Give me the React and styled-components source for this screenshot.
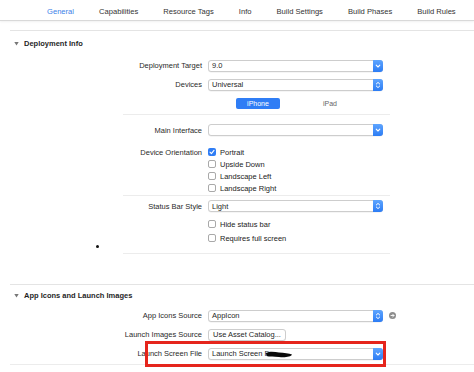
import React from 'react';
import styled, { createGlobalStyle } from 'styled-components';

const GlobalStyle = createGlobalStyle`
  html, body {
    margin: 0;
    padding: 0;
    background: #ffffff;
  }
  body {
    font-family: "Liberation Sans", Arial, sans-serif;
    font-size: 7.5px;
    color: #222;
  }
`;

const Page = styled.div`
  position: relative;
  width: 474px;
  height: 372px;
  overflow: hidden;
  background: #fff;
`;

const TabBar = styled.div`
  height: 20px;
  display: flex;
  align-items: center;
  gap: 25px;
  padding-left: 47px;
  border-bottom: 1px solid #d9d9d9;
  box-shadow: 0 1px 2px rgba(0, 0, 0, 0.06);
`;

const Tab = styled.div`
  font-size: 7.6px;
  color: ${p => (p.active ? '#3a7ee8' : '#333')};
  padding-top: 2px;
`;

const Section = styled.div`
  margin-left: 10px;
  border-top: 1px solid #e4e4e4;
  margin-top: ${p => p.top}px;
`;

const SectionHeader = styled.div`
  height: ${p => p.h}px;
  display: flex;
  align-items: center;
  padding-left: 4px;
  gap: 5px;
  font-weight: bold;
  color: #1f1f1f;
`;

const Row = styled.div`
  display: grid;
  grid-template-columns: 192px 175px auto;
  column-gap: 6px;
  align-items: center;
  height: ${p => p.h || 19}px;
  margin-top: ${p => p.mt || 0}px;
`;

const Label = styled.div`
  text-align: right;
  color: #2a2a2a;
  white-space: nowrap;
`;

const Popup = styled.div`
  position: relative;
  height: 12px;
  box-sizing: border-box;
  display: flex;
  align-items: center;
  border: 1px solid #cdcdcd;
  border-radius: 3px;
  padding-left: 3px;
  background: #fff;
  color: #1f1f1f;
  box-shadow: 0 0.5px 0.5px rgba(0, 0, 0, 0.08);
`;

const PopupText = styled.span`
  flex: 1;
  white-space: nowrap;
`;

const Stepper = styled.div`
  width: 10px;
  align-self: stretch;
  margin: -1px -1px -1px 0;
  border-radius: 0 3px 3px 0;
  background: linear-gradient(#5ea5ff, #2c7cf4);
  display: flex;
  align-items: center;
  justify-content: center;
`;

const Button = styled.div`
  justify-self: start;
  height: 12px;
  box-sizing: border-box;
  padding: 0 4px;
  display: flex;
  align-items: center;
  border: 1px solid #cdcdcd;
  border-radius: 3px;
  background: #fff;
  color: #1f1f1f;
  box-shadow: 0 0.5px 0.5px rgba(0, 0, 0, 0.08);
`;

const Segments = styled.div`
  grid-column: 2;
  display: flex;
  align-items: center;
  padding-left: 28px;
  gap: 43px;
`;

const Segment = styled.div`
  width: ${p => (p.active ? '44px' : 'auto')};
  height: 11px;
  border-radius: 2px;
  display: flex;
  align-items: center;
  justify-content: center;
  background: ${p => (p.active ? '#2f7df5' : 'transparent')};
  color: ${p => (p.active ? '#fff' : '#666')};
  font-size: 7px;
`;

const Divider = styled.div`
  height: 1px;
  background: #ececec;
  margin-top: ${p => p.mt || 0}px;
  margin-left: ${p => (p.full ? 0 : 113)}px;
  width: ${p => (p.full ? 'auto' : '267px')};
`;

const CheckList = styled.div`
  display: flex;
  flex-direction: column;
  margin-top: ${p => p.mt || 0}px;
`;

const CheckRow = styled.div`
  display: grid;
  grid-template-columns: 192px auto;
  column-gap: 6px;
  align-items: center;
  height: ${p => p.h}px;
`;

const CheckItem = styled.div`
  display: flex;
  align-items: center;
  gap: 4px;
  color: #222;
`;

const Box = styled.div`
  width: 8px;
  height: 8px;
  box-sizing: border-box;
  border-radius: 2px;
  border: ${p => (p.checked ? 'none' : '1px solid #a9a9a9')};
  background: ${p => (p.checked ? '#2f7df5' : '#fff')};
  display: flex;
  align-items: center;
  justify-content: center;
`;

const GoIcon = styled.div`
  width: 7px;
  height: 7px;
  border-radius: 50%;
  background: #8d8d8d;
  display: flex;
  align-items: center;
  justify-content: center;
`;

const Scribble = styled.svg`
  position: absolute;
  left: 56px;
  top: 1px;
`;

const RedMark = styled.div`
  position: absolute;
  left: 145px;
  top: 341px;
  width: 241px;
  height: 26px;
  box-sizing: border-box;
  border: 3px solid #e5251c;
`;

const Dot = styled.div`
  position: absolute;
  left: 96px;
  top: 245px;
  width: 3px;
  height: 3px;
  border-radius: 50%;
  background: #111;
`;

const Triangle = () => (
  <svg width="5" height="5" viewBox="0 0 5 5">
    <path d="M0.3 1 H4.7 L2.5 4.4 Z" fill="#777" />
  </svg>
);

const Chevron = ({ double }) => (
  <svg width="8" height="10" viewBox="0 0 8 10">
    {double ? (
      <path d="M2.3 4 L4 2.4 L5.7 4 M2.3 6 L4 7.6 L5.7 6" stroke="#fff" strokeWidth="1" fill="none" strokeLinecap="round" strokeLinejoin="round" />
    ) : (
      <path d="M2.2 4.2 L4 6 L5.8 4.2" stroke="#fff" strokeWidth="1.1" fill="none" strokeLinecap="round" strokeLinejoin="round" />
    )}
  </svg>
);

const Select = ({ value, double, children }) => (
  <Popup>
    <PopupText>{value}</PopupText>
    {children}
    <Stepper>
      <Chevron double={double} />
    </Stepper>
  </Popup>
);

const Check = ({ checked, label }) => (
  <CheckItem>
    <Box checked={checked}>
      {checked && (
        <svg width="6" height="6" viewBox="0 0 6 6">
          <path d="M1 3.2 L2.4 4.6 L5 1.4" stroke="#fff" strokeWidth="1.1" fill="none" strokeLinecap="round" strokeLinejoin="round" />
        </svg>
      )}
    </Box>
    {label}
  </CheckItem>
);

const tabs = ['General', 'Capabilities', 'Resource Tags', 'Info', 'Build Settings', 'Build Phases', 'Build Rules'];

export default function App() {
  return (
    <Page>
      <GlobalStyle />
      <TabBar>
        {tabs.map(t => (
          <Tab key={t} active={t === 'General'}>{t}</Tab>
        ))}
      </TabBar>

      <Section top={9}>
        <SectionHeader h={25}>
          <Triangle />
          Deployment Info
        </SectionHeader>
        <Row>
          <Label>Deployment Target</Label>
          <Select value="9.0" />
        </Row>
        <Row>
          <Label>Devices</Label>
          <Select value="Universal" double />
        </Row>
        <Row h={18}>
          <Segments>
            <Segment active>iPhone</Segment>
            <Segment>iPad</Segment>
          </Segments>
        </Row>
        <Divider mt={2} />

        <Row h={18} mt={6}>
          <Label>Main Interface</Label>
          <Select value="" />
        </Row>
        <CheckList mt={7}>
          <CheckRow h={12}>
            <Label>Device Orientation</Label>
            <Check checked label="Portrait" />
          </CheckRow>
          <CheckRow h={12}>
            <span />
            <Check label="Upside Down" />
          </CheckRow>
          <CheckRow h={12}>
            <span />
            <Check label="Landscape Left" />
          </CheckRow>
          <CheckRow h={12}>
            <span />
            <Check label="Landscape Right" />
          </CheckRow>
        </CheckList>
        <Divider mt={1} />

        <Row h={18} mt={1}>
          <Label>Status Bar Style</Label>
          <Select value="Light" double />
        </Row>
        <CheckList mt={2}>
          <CheckRow h={14}>
            <span />
            <Check label="Hide status bar" />
          </CheckRow>
          <CheckRow h={14}>
            <span />
            <Check label="Requires full screen" />
          </CheckRow>
        </CheckList>
        <Divider mt={8} />
      </Section>

      <Section top={30}>
        <SectionHeader h={21}>
          <Triangle />
          App Icons and Launch Images
        </SectionHeader>
        <Row>
          <Label>App Icons Source</Label>
          <Select value="AppIcon" double />
          <GoIcon>
            <svg width="5" height="5" viewBox="0 0 5 5">
              <path d="M1 2.5 H4 M2.7 1.2 L4 2.5 L2.7 3.8" stroke="#fff" strokeWidth="0.9" fill="none" strokeLinecap="round" strokeLinejoin="round" />
            </svg>
          </GoIcon>
        </Row>
        <Row>
          <Label>Launch Images Source</Label>
          <Button>Use Asset Catalog...</Button>
        </Row>
        <Row>
          <Label>Launch Screen File</Label>
          <Select value="Launch Screen F">
            <Scribble width="28" height="9" viewBox="0 0 28 9">
              <path d="M1 3 C5 1 10 2 14 2.5 C19 3 24 3 27 4.5 C26 7 20 7.5 14 7 C9 6.6 4 7 1.5 6 Z" fill="#0a0a0a" />
            </Scribble>
          </Select>
        </Row>
        <Divider full mt={1} />
      </Section>

      <Dot />
      <RedMark />
    </Page>
  );
}
